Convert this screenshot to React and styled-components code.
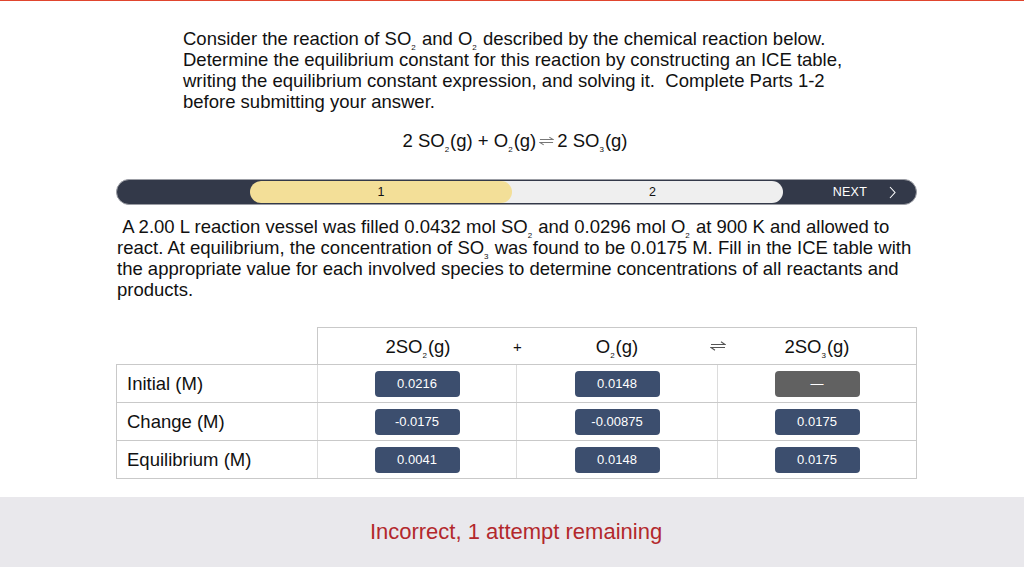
import React from "react";
import styled, { createGlobalStyle } from "styled-components";

const Global = createGlobalStyle`
  html, body { margin: 0; padding: 0; background: #fff; }
  body { font-family: "Liberation Sans", Arial, sans-serif; color: #111; }
`;

const Page = styled.div`
  width: 1024px;
  height: 567px;
  overflow: hidden;
  border-top: 1px solid #e0452e;
  box-sizing: border-box;
  display: flex;
  flex-direction: column;
`;

const Prompt = styled.div`
  padding: 27px 0 0 183px;
  font-size: 18.5px;
  line-height: 21px;
  white-space: nowrap;
`;

const Sub = styled.sub`
  font-size: 8px;
  line-height: 0;
  vertical-align: -5px;
  margin: 0 1px 0 0;
`;

const Equation = styled.div`
  margin-top: 18px;
  text-align: center;
  font-size: 18.5px;
  line-height: 21px;
  display: flex;
  justify-content: center;
  align-items: center;
  gap: 3px;
  padding-left: 6px;
`;

const Arrow = ({ w = 16, color = "#666" }) => (
  <svg width={w} height="10" viewBox="0 0 16 10" style={{ display: "block" }}>
    <path d="M1 3.5 H15 L11 0.8" fill="none" stroke={color} strokeWidth="1.1" />
    <path d="M15 6.5 H1 L5 9.2" fill="none" stroke={color} strokeWidth="1.1" />
  </svg>
);

const Progress = styled.div`
  margin: 28px 0 0 116px;
  width: 801px;
  height: 26px;
  box-sizing: border-box;
  border: 1px solid #9b9da4;
  border-radius: 13px;
  background: #333949;
  display: flex;
  align-items: center;
  padding: 1px;
  font-size: 12.5px;
`;

const Lead = styled.div`
  width: 132px;
  flex: none;
`;

const Step = styled.div`
  position: relative;
  z-index: ${(p) => (p.$active ? 2 : 1)};
  flex: none;
  height: 22px;
  border-radius: 11px;
  background: ${(p) => (p.$active ? "#f3df98" : "#efefef")};
  width: ${(p) => p.$w}px;
  margin-left: ${(p) => p.$ml || 0}px;
  padding-left: ${(p) => p.$pl || 0}px;
  box-sizing: border-box;
  display: flex;
  align-items: center;
  justify-content: center;
  color: #111;
`;

const Next = styled.div`
  flex: 1;
  display: flex;
  justify-content: flex-end;
  align-items: center;
  gap: 22px;
  padding-right: 19px;
  color: #fff;
  font-size: 12.5px;
  letter-spacing: 0.2px;
`;

const Problem = styled.div`
  margin-top: 11px;
  padding-left: 117px;
  font-size: 18.5px;
  line-height: 21px;
  white-space: nowrap;
`;

const Table = styled.div`
  margin: 27px 0 0 116px;
  width: 801px;
`;

const HeadRow = styled.div`
  display: grid;
  grid-template-columns: 201px 600px;
`;

const HeadCells = styled.div`
  border: 1px solid #c9c9c9;
  border-bottom: none;
  height: 36px;
  display: grid;
  grid-template-columns: 160px 39px 160px 41px 158px;
  padding: 0 20px 0 20px;
  align-items: center;
  font-size: 18.5px;
  box-sizing: content-box;
`;

const Species = styled.div`
  text-align: center;
  padding-top: 2px;
`;

const Op = styled.div`
  display: flex;
  justify-content: center;
  font-size: 15px;
`;

const Body = styled.div`
  border: 1px solid #c9c9c9;
`;

const Row = styled.div`
  display: grid;
  grid-template-columns: 200px 199px 201px 199px;
  height: 37px;
  & + & { border-top: 1px solid #c9c9c9; }
`;

const Label = styled.div`
  display: flex;
  align-items: center;
  padding-left: 10px;
  font-size: 18.5px;
`;

const Cell = styled.div`
  border-left: 1px solid #dcdcdc;
  display: flex;
  align-items: center;
  justify-content: center;
`;

const Value = styled.div`
  width: 85px;
  height: 26px;
  border-radius: 4px;
  background: ${(p) => (p.$empty ? "#616161" : "#3c4e6e")};
  color: #fff;
  font-size: 13px;
  display: flex;
  align-items: center;
  justify-content: center;
`;

const Feedback = styled.div`
  margin-top: 18px;
  flex: 1;
  background: #e9e8ec;
  display: flex;
  justify-content: center;
  padding: 22px 0 0 8px;
  color: #b3282c;
  font-size: 22px;
`;

const rows = [
  { label: "Initial (M)", vals: ["0.0216", "0.0148", null] },
  { label: "Change (M)", vals: ["-0.0175", "-0.00875", "0.0175"] },
  { label: "Equilibrium (M)", vals: ["0.0041", "0.0148", "0.0175"] },
];

export default function App() {
  return (
    <>
      <Global />
      <Page>
        <Prompt>
          Consider the reaction of SO<Sub>2</Sub> and O<Sub>2</Sub> described by the chemical reaction below.
          <br />
          Determine the equilibrium constant for this reaction by constructing an ICE table,
          <br />
          writing the equilibrium constant expression, and solving it.&nbsp; Complete Parts 1-2
          <br />
          before submitting your answer.
        </Prompt>
        <Equation>
          <span>
            2 SO<Sub>2</Sub>(g) + O<Sub>2</Sub>(g)
          </span>
          <Arrow w={15} color="#777" />
          <span>
            2 SO<Sub>3</Sub>(g)
          </span>
        </Equation>
        <Progress>
          <Lead />
          <Step $active $w={262}>1</Step>
          <Step $w={293} $ml={-22} $pl={32}>2</Step>
          <Next>
            <span>NEXT</span>
            <svg width="7" height="13" viewBox="0 0 7 13">
              <path d="M1 1 L6 6.5 L1 12" fill="none" stroke="#fff" strokeWidth="1.1" />
            </svg>
          </Next>
        </Progress>
        <Problem>
          &nbsp;A 2.00 L reaction vessel was filled 0.0432 mol SO<Sub>2</Sub> and 0.0296 mol O<Sub>2</Sub> at 900 K and allowed to
          <br />
          react. At equilibrium, the concentration of SO<Sub>3</Sub> was found to be 0.0175 M. Fill in the ICE table with
          <br />
          the appropriate value for each involved species to determine concentrations of all reactants and
          <br />
          products.
        </Problem>
        <Table>
          <HeadRow>
            <div />
            <HeadCells>
              <Species>
                2SO<Sub>2</Sub>(g)
              </Species>
              <Op>+</Op>
              <Species>
                O<Sub>2</Sub>(g)
              </Species>
              <Op>
                <Arrow w={16} color="#555" />
              </Op>
              <Species>
                2SO<Sub>3</Sub>(g)
              </Species>
            </HeadCells>
          </HeadRow>
          <Body>
            {rows.map((r) => (
              <Row key={r.label}>
                <Label>{r.label}</Label>
                {r.vals.map((v, i) => (
                  <Cell key={i}>
                    {v === null ? <Value $empty>—</Value> : <Value>{v}</Value>}
                  </Cell>
                ))}
              </Row>
            ))}
          </Body>
        </Table>
        <Feedback>Incorrect, 1 attempt remaining</Feedback>
      </Page>
    </>
  );
}
